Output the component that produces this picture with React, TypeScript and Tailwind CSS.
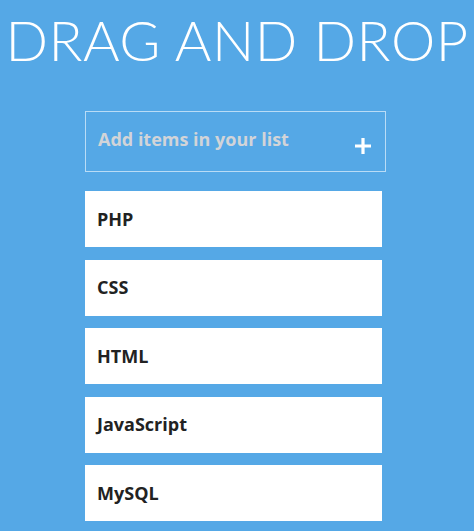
import { useState } from "react";

const initialItems = ["PHP", "CSS", "HTML", "JavaScript", "MySQL"];

export default function App() {
  const [items, setItems] = useState<string[]>(initialItems);
  const [text, setText] = useState("");

  const addItem = () => {
    if (!text.trim()) return;
    setItems([...items, text.trim()]);
    setText("");
  };

  return (
    <div
      className="min-h-[531px] w-full bg-[#55a8e6] overflow-hidden"
      style={{ fontFamily: "'Open Sans', Lato, sans-serif" }}
    >
      {/* Title */}
      <h1
        className="whitespace-nowrap text-center text-white font-light text-[56px] leading-none pt-[12px] tracking-[0.5px]"
        style={{ fontFamily: "Lato, sans-serif" }}
      >
        DRAG AND DROP
      </h1>

      <div className="ml-[85px] mt-[43px] w-[301px]">
        {/* Add item input */}
        <div className="flex h-[61px] items-center border border-[#b9dcf6] pl-[12px] pr-[13px]">
          <input
            value={text}
            onChange={(e) => setText(e.target.value)}
            placeholder="Add items in your list"
            className="flex-1 bg-transparent text-[18px] font-bold text-white placeholder:text-[#d2d4d8] outline-none pb-[4px]"
          />
          <button onClick={addItem} className="mt-[9px] text-white">
            <svg width="18" height="18" viewBox="0 0 18 18">
              <path d="M9 1v16M1 9h16" stroke="white" strokeWidth="3.2" />
            </svg>
          </button>
        </div>

        {/* Items */}
        <ul className="mt-[19px] flex w-[297px] flex-col gap-[12.5px]">
          {items.map((item) => (
            <li
              key={item}
              draggable
              className="flex h-[56px] items-center bg-white px-[12px] text-[18px] font-bold text-[#222]"
            >
              {item}
            </li>
          ))}
        </ul>
      </div>
    </div>
  );
}
